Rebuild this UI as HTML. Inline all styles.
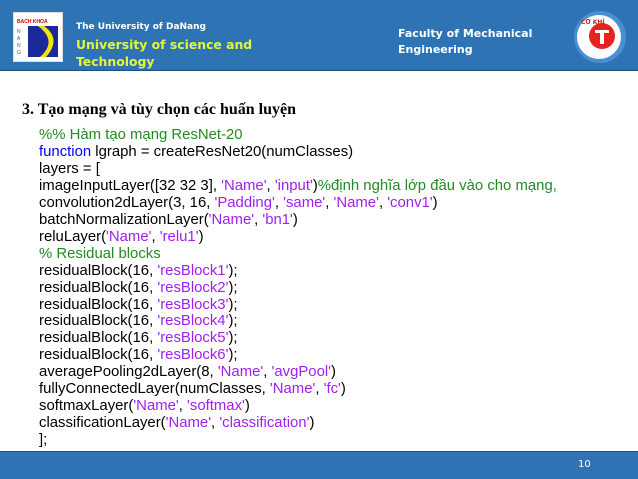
<!DOCTYPE html>
<html><head><meta charset="utf-8"><style>
body{margin:0;width:638px;height:478px;position:relative;background:#fff;overflow:hidden;font-family:"DejaVu Sans","Liberation Sans",sans-serif}
.hdr{position:absolute;left:0;top:0;width:638px;height:70px;background:#2e74b5;border-bottom:1px solid #1f4e79}
.ftr{position:absolute;left:0;top:451px;width:638px;height:27px;background:#2e74b5;border-top:1px solid #1f4e79}
.t{position:absolute;font-weight:bold;white-space:nowrap}
pre{position:absolute;left:39px;top:127px;margin:0;font-family:"Liberation Sans","DejaVu Sans",sans-serif;font-size:14.9px;line-height:16.95px;color:#000}
.c{color:#228b22}.k{color:#0000ff}.s{color:#a020f0}
</style></head><body>
<div class="hdr">
 <div style="position:absolute;left:13px;top:12px;width:48px;height:48px;background:#fff;border:1px solid #ddd">
  <svg width="48" height="48" viewBox="0 0 48 48">
   <rect x="14" y="13" width="30" height="31" fill="#1a2a9a"/>
   <path d="M24 13 Q44 28 26 44 L32 44 Q48 26 30 13 Z" fill="#f2e600"/>
   <text x="3" y="10" font-size="5" fill="#c00" font-weight="bold" font-family="Liberation Sans">BACH KHOA</text>
   <text x="3" y="20" font-size="5" fill="#555" font-family="Liberation Sans">N</text>
   <text x="3" y="27" font-size="5" fill="#555" font-family="Liberation Sans">A</text>
   <text x="3" y="34" font-size="5" fill="#555" font-family="Liberation Sans">N</text>
   <text x="3" y="41" font-size="5" fill="#555" font-family="Liberation Sans">G</text>
  </svg>
 </div>
 <div class="t" style="left:76px;top:22px;font-size:9px;color:#fff">The University of DaNang</div>
 <div class="t" style="left:76px;top:36px;font-size:12.4px;color:#e6f53a;line-height:17px">University of science and<br>Technology</div>
 <div class="t" style="left:398px;top:26px;font-size:11px;color:#fff;line-height:16px">Faculty of Mechanical<br>Engineering</div>
 <svg style="position:absolute;left:573px;top:10px" width="54" height="54" viewBox="0 0 54 54">
  <circle cx="27" cy="27" r="26" fill="#4a90d0"/>
  <circle cx="26" cy="27" r="22" fill="#fff"/>
  <circle cx="29" cy="26" r="13" fill="#e82020"/>
  <path d="M22 20 H36 V23 H31 V34 H27 V23 H22 Z" fill="#fff"/>
  <text x="8" y="14" font-size="6" fill="#d02020" font-weight="bold">CƠ KHÍ</text>
 </svg>
</div>
<div class="t" style="left:22px;top:101px;font-family:'Liberation Serif',serif;font-size:16px;color:#000">3. Tạo mạng và tùy chọn các huấn luyện</div>
<pre><span class="c">%% Hàm tạo mạng ResNet-20</span>
<span class="k">function</span> lgraph = createResNet20(numClasses)
layers = [
imageInputLayer([32 32 3], <span class="s">'Name'</span>, <span class="s">'input'</span>)<span class="c">%định nghĩa lớp đầu vào cho mạng,</span>
convolution2dLayer(3, 16, <span class="s">'Padding'</span>, <span class="s">'same'</span>, <span class="s">'Name'</span>, <span class="s">'conv1'</span>)
batchNormalizationLayer(<span class="s">'Name'</span>, <span class="s">'bn1'</span>)
reluLayer(<span class="s">'Name'</span>, <span class="s">'relu1'</span>)
<span class="c">% Residual blocks</span>
residualBlock(16, <span class="s">'resBlock1'</span>);
residualBlock(16, <span class="s">'resBlock2'</span>);
residualBlock(16, <span class="s">'resBlock3'</span>);
residualBlock(16, <span class="s">'resBlock4'</span>);
residualBlock(16, <span class="s">'resBlock5'</span>);
residualBlock(16, <span class="s">'resBlock6'</span>);
averagePooling2dLayer(8, <span class="s">'Name'</span>, <span class="s">'avgPool'</span>)
fullyConnectedLayer(numClasses, <span class="s">'Name'</span>, <span class="s">'fc'</span>)
softmaxLayer(<span class="s">'Name'</span>, <span class="s">'softmax'</span>)
classificationLayer(<span class="s">'Name'</span>, <span class="s">'classification'</span>)
];</pre>
<div class="ftr"><div style="position:absolute;left:578px;top:7px;font-size:10px;color:#fff">10</div></div>
</body></html>
